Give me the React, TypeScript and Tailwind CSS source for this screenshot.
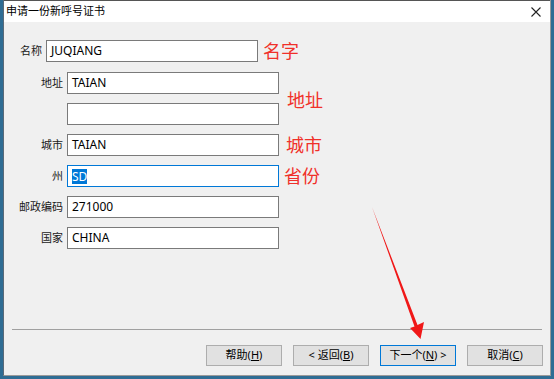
import React from "react";

const cjk = '"Noto Sans", "Noto Sans CJK SC", sans-serif';

function Field({ label, value, labelW = "w-[63px]", selected = false, focused = false }: { label: string; value: string; labelW?: string; selected?: boolean; focused?: boolean }) {
  return (
    <div className="flex items-center h-[22px]">
      <div className={`${labelW} pr-[4px] text-right text-[11px] text-[#1a1a1a]`}>{label}</div>
      <div
        className={`w-[212px] h-[22px] bg-white border flex items-center pl-[4px] text-[12px] text-black ${focused ? "border-[#0078d7]" : "border-[#7a7a7a]"}`}
      >
        {selected ? <span className="bg-[#0078d7] text-white leading-[15px]">{value}</span> : value}
      </div>
    </div>
  );
}

function Btn({ children, def = false }: { children: React.ReactNode; def?: boolean }) {
  return (
    <div
      className={`w-[76px] h-[21px] flex items-center justify-center text-[11px] text-black bg-[#e1e1e1] border ${def ? "border-[#0078d7]" : "border-[#adadad]"}`}
    >
      {children}
    </div>
  );
}

export default function App() {
  return (
    <div className="relative w-[554px] h-[379px] bg-[#2f6d94] overflow-hidden" style={{ fontFamily: cjk }}>
      <div className="ml-[3px] w-[548px] h-[376px] bg-[#f0f0f0] border-l border-l-[#5a6a78] border-r border-b border-[#9a9a9a] flex flex-col">
        <div className="h-[22px] bg-white flex items-center justify-between pl-[2px] pr-[9px] border-t border-[#555]">
          <span className="text-[11px] text-black">申请一份新呼号证书</span>
          <svg width="10" height="10" viewBox="0 0 10 10">
            <path d="M0.5 0.5 L9.5 9.5 M9.5 0.5 L0.5 9.5" stroke="#222" strokeWidth="1.1" />
          </svg>
        </div>
        <div className="flex flex-col pt-[18px]">
          <div className="flex items-center">
            <Field label="名称" value="JUQIANG" labelW="w-[42px]" />
            <span className="ml-[5px] text-[18px] text-[#f0302a] leading-none">名字</span>
          </div>
          <div className="flex items-center mt-[10px]">
            <div className="flex flex-col gap-[9px]">
              <Field label="地址" value="TAIAN" />
              <Field label="" value="" />
            </div>
            <span className="ml-[8px] mt-[3px] text-[18px] text-[#f0302a] leading-none">地址</span>
          </div>
          <div className="flex items-center mt-[9px]">
            <Field label="城市" value="TAIAN" />
            <span className="ml-[7px] text-[18px] text-[#f0302a] leading-none">城市</span>
          </div>
          <div className="flex items-center mt-[9px]">
            <Field label="州" value="SD" selected focused />
            <span className="ml-[5px] text-[18px] text-[#f0302a] leading-none">省份</span>
          </div>
          <div className="mt-[9px]">
            <Field label="邮政编码" value="271000" />
          </div>
          <div className="mt-[9px]">
            <Field label="国家" value="CHINA" />
          </div>
        </div>
        <div className="mt-[80px] ml-[8px] mr-[8px] h-px bg-[#a0a0a0]" />
        <div className="flex justify-end gap-[11px] mt-[15px] pr-[7px]">
          <Btn>帮助(<u>H</u>)</Btn>
          <Btn>&lt; 返回(<u>B</u>)</Btn>
          <Btn def>下一个(<u>N</u>) &gt;</Btn>
          <Btn>取消(<u>C</u>)</Btn>
        </div>
      </div>
      <svg className="absolute left-0 top-0 pointer-events-none" width="554" height="379" viewBox="0 0 554 379">
        <polygon points="372,207 417.5,325 424,322 420.5,339 410,328 414.5,326.5" fill="#f01818" />
      </svg>
    </div>
  );
}
